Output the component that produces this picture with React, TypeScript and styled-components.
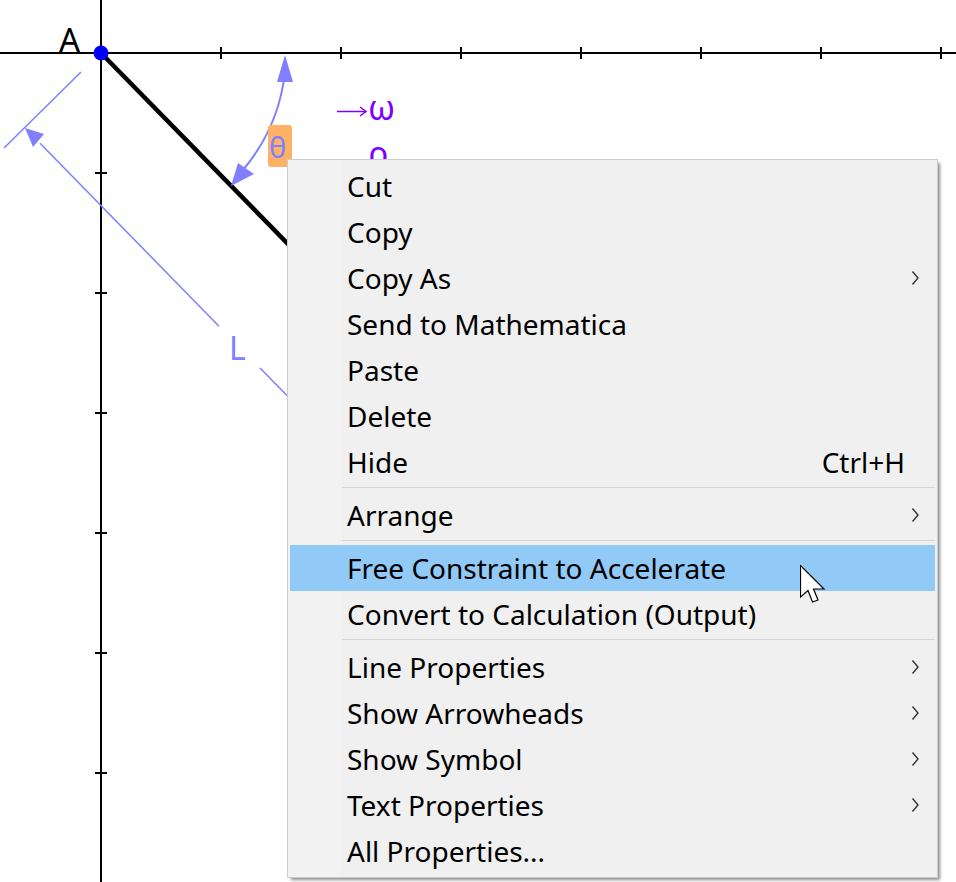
import React from 'react';
import styled, { createGlobalStyle } from 'styled-components';

type MenuEntry =
  | { kind: 'item'; label: string; shortcut?: string; submenu?: boolean; active?: boolean }
  | { kind: 'separator' };

const MENU: MenuEntry[] = [
  { kind: 'item', label: 'Cut' },
  { kind: 'item', label: 'Copy' },
  { kind: 'item', label: 'Copy As', submenu: true },
  { kind: 'item', label: 'Send to Mathematica' },
  { kind: 'item', label: 'Paste' },
  { kind: 'item', label: 'Delete' },
  { kind: 'item', label: 'Hide', shortcut: 'Ctrl+H' },
  { kind: 'separator' },
  { kind: 'item', label: 'Arrange', submenu: true },
  { kind: 'separator' },
  { kind: 'item', label: 'Free Constraint to Accelerate', active: true },
  { kind: 'item', label: 'Convert to Calculation (Output)' },
  { kind: 'separator' },
  { kind: 'item', label: 'Line Properties', submenu: true },
  { kind: 'item', label: 'Show Arrowheads', submenu: true },
  { kind: 'item', label: 'Show Symbol', submenu: true },
  { kind: 'item', label: 'Text Properties', submenu: true },
  { kind: 'item', label: 'All Properties...' }
];

const X_TICKS = [221, 341, 461, 581, 701, 821, 941];
const Y_TICKS = [173, 293, 413, 533, 653, 773];

// slope of segment AB (it runs under the menu)
const SLOPE = 190 / 186;

const Chevron = () => (
  <svg width="9" height="16" viewBox="0 0 9 16">
    <polyline points="1.5,1.5 7,8 1.5,14.5" fill="none" stroke="#333" strokeWidth="1.4" />
  </svg>
);

const Pointer = () => (
  <CursorIcon width="26" height="40" viewBox="0 0 26 40">
    <path
      d="M0.5 0.5 L0.5 32 L8 25.5 L12.5 37 L18 35 L13.5 24 L24 24 Z"
      fill="#fff"
      stroke="#000"
      strokeWidth="1.2"
      strokeLinejoin="miter"
    />
  </CursorIcon>
);

const Diagram = () => {
  const dimStart = { x: 25, y: 128 };
  const dimAt = (x: number) => dimStart.y + (x - dimStart.x) * SLOPE;

  return (
    <Canvas width="956" height="882" viewBox="0 0 956 882">
      {/* axes */}
      <g stroke="#000" strokeWidth="2">
        <line x1="0" y1="53" x2="956" y2="53" />
        <line x1="101" y1="0" x2="101" y2="882" />
        {X_TICKS.map((x) => (
          <line key={x} x1={x} y1="47" x2={x} y2="59" />
        ))}
        {Y_TICKS.map((y) => (
          <line key={y} x1="95" y1={y} x2="107" y2={y} />
        ))}
      </g>

      {/* segment */}
      <line x1="101" y1="53" x2="420" y2={53 + 319 * SLOPE} stroke="#000" strokeWidth="4.5" />

      {/* length dimension L */}
      <g stroke="#8080ff" strokeWidth="1.5" fill="none">
        <line x1="81" y1="72" x2="4" y2="148" />
        <line x1="40" y1={dimAt(40)} x2="219" y2={dimAt(219)} />
        <line x1="260" y1={dimAt(260)} x2="320" y2={dimAt(320)} />
      </g>
      <polygon points="25,128 33,147 44,134" fill="#8080ff" />
      <DiagramText x="229" y="360" fill="#8080ff" fontSize="32">
        L
      </DiagramText>

      {/* angle theta */}
      <path d="M285 72 A184 184 0 0 1 243 170" stroke="#8080ff" strokeWidth="2" fill="none" />
      <polygon points="285,55 277,82 293,82" fill="#8080ff" />
      <polygon points="231,186 238,163 254,174" fill="#8080ff" />
      <rect x="268" y="125" width="24" height="42" rx="3" fill="#ffb266" />
      <DiagramText x="269" y="158" fill="#8080ff" fontSize="29">
        θ
      </DiagramText>

      {/* omega vector */}
      <g stroke="#8000ff" strokeWidth="1.5" fill="none">
        <line x1="337" y1="111.5" x2="366" y2="111.5" />
        <polyline points="360,107 366,111.5 360,116" />
      </g>
      <DiagramText x="368" y="120" fill="#8000ff" fontSize="34">
        ω
      </DiagramText>
      <DiagramText x="368" y="166" fill="#8000ff" fontSize="34">
        ρ
      </DiagramText>

      {/* point A */}
      <circle cx="101" cy="53" r="7.5" fill="#0000ff" />
      <DiagramText x="59" y="52" fill="#000" fontSize="33">
        A
      </DiagramText>
    </Canvas>
  );
};

const App = () => {
  return (
    <>
      <GlobalStyle />
      <Stage>
        <Diagram />
        <Menu>
          {MENU.map((entry, i) =>
            entry.kind === 'separator' ? (
              <Separator key={i} />
            ) : (
              <MenuItem key={i} $active={entry.active}>
                <ItemLabel>{entry.label}</ItemLabel>
                {entry.shortcut && <Shortcut>{entry.shortcut}</Shortcut>}
                {entry.submenu && (
                  <SubmenuMark>
                    <Chevron />
                  </SubmenuMark>
                )}
              </MenuItem>
            )
          )}
        </Menu>
        <Pointer />
      </Stage>
    </>
  );
};

const GlobalStyle = createGlobalStyle`
  html, body {
    margin: 0;
    background: #fff;
  }
  body {
    font-family: 'Noto Sans', 'Open Sans', sans-serif;
  }
`;

const Stage = styled.div`
  position: relative;
  width: 956px;
  height: 882px;
  overflow: hidden;
  background: #fff;
`;

const Canvas = styled.svg`
  display: block;
`;

const DiagramText = styled.text`
  font-family: 'Noto Sans', 'Open Sans', sans-serif;
`;

const Menu = styled.div`
  position: absolute;
  left: 287px;
  top: 159px;
  width: 651px;
  box-sizing: border-box;
  padding: 3px 0 3px;
  border: 1px solid #cccccc;
  background: linear-gradient(to right, #f2f2f2 0 54px, #f0f0f0 54px);
  box-shadow: 3px 3px 3px -1px rgba(0, 0, 0, 0.45);
  font-family: 'Noto Sans', 'Open Sans', sans-serif;
`;

const MenuItem = styled.div<{ $active?: boolean }>`
  display: flex;
  align-items: center;
  height: 46px;
  margin: 0 2px;
  padding: 0 15px 0 57px;
  background: ${(p) => (p.$active ? '#91c9f7' : 'transparent')};
  color: #000;
  font-size: 28px;
  white-space: nowrap;
`;

const ItemLabel = styled.span`
  flex: 1;
`;

const Shortcut = styled.span`
  margin-right: 15px;
`;

const SubmenuMark = styled.span`
  display: flex;
  align-items: center;
`;

const Separator = styled.div`
  height: 7px;
  margin: 0 2px 0 54px;
  background: linear-gradient(#d7d7d7, #d7d7d7) no-repeat 0 2px / 100% 1px;
`;

const CursorIcon = styled.svg`
  position: absolute;
  left: 800px;
  top: 565px;
`;

export default App;
